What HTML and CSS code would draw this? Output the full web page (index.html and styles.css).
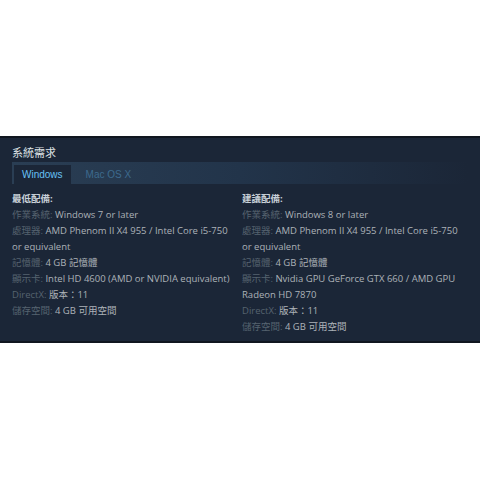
FILE: index.html
```html
<!DOCTYPE html>
<html lang="zh-Hant">
<head>
<meta charset="utf-8">
<link rel="stylesheet" href="styles.css">
</head>
<body>
<div class="page">
  <section class="sysreq">
    <h2 class="title">系統需求</h2>
    <div class="tabs">
      <span class="tab active">Windows</span>
      <span class="tab">Mac OS X</span>
    </div>
    <div class="cols">
      <div class="col">
        <div class="head">最低配備:</div>
        <ul class="list">
          <li><span class="lbl">作業系統:</span> Windows 7 or later</li>
          <li><span class="lbl">處理器:</span> AMD Phenom II X4 955 / Intel Core i5-750 or equivalent</li>
          <li><span class="lbl">記憶體:</span> 4 GB 記憶體</li>
          <li><span class="lbl">顯示卡:</span> Intel HD 4600 (AMD or NVIDIA equivalent)</li>
          <li><span class="lbl">DirectX:</span> 版本：11</li>
          <li><span class="lbl">儲存空間:</span> 4 GB 可用空間</li>
        </ul>
      </div>
      <div class="col">
        <div class="head">建議配備:</div>
        <ul class="list">
          <li><span class="lbl">作業系統:</span> Windows 8 or later</li>
          <li><span class="lbl">處理器:</span> AMD Phenom II X4 955 / Intel Core i5-750 or equivalent</li>
          <li><span class="lbl">記憶體:</span> 4 GB 記憶體</li>
          <li><span class="lbl">顯示卡:</span> Nvidia GPU GeForce GTX 660 / AMD GPU Radeon HD 7870</li>
          <li><span class="lbl">DirectX:</span> 版本：11</li>
          <li><span class="lbl">儲存空間:</span> 4 GB 可用空間</li>
        </ul>
      </div>
    </div>
  </section>
</div>
</body>
</html>
```
FILE: styles.css
```css
html, body {
  margin: 0;
  padding: 0;
  background: #ffffff;
}
.page {
  padding-top: 136px;
}
.sysreq {
  background: #1b2637;
  border-top: 2px solid #10161f;
  border-bottom: 2px solid #10161f;
  padding: 8px 12px 0 12px;
  font-family: "Open Sans", "Noto Sans CJK TC", sans-serif;
  color: #acb2b8;
  height: 207px;
  box-sizing: border-box;
}
.title {
  margin: 0;
  font-size: 11px;
  font-weight: normal;
  color: #dfe3e6;
  line-height: 14px;
}
.tabs {
  margin-top: 2px;
  height: 22px;
  background: linear-gradient(to right, #2a3e54 0%, #22344a 50%, #1b2637 100%);
  display: flex;
  align-items: flex-end;
  padding-left: 2px;
  gap: 7px;
}
.tab {
  font-family: "Liberation Sans", Arial, sans-serif;
  font-size: 10px;
  line-height: 19px;
  padding: 0 8px;
  color: #3d6a8e;
}
.tab.active {
  background: #1b2637;
  color: #67c1f5;
}
.cols {
  display: grid;
  grid-template-columns: 1fr 1fr;
  column-gap: 4px;
  margin-top: 8px;
}
.head {
  font-size: 9.5px;
  line-height: 14px;
  color: #c8d0d8;
  font-weight: bold;
  margin-bottom: 1px;
}
.list {
  list-style: none;
  margin: 0;
  padding: 0;
  font-size: 9.5px;
  line-height: 16px;
}
.list li {
  line-height: 16px;
}
.lbl {
  color: #56636f;
}
```
